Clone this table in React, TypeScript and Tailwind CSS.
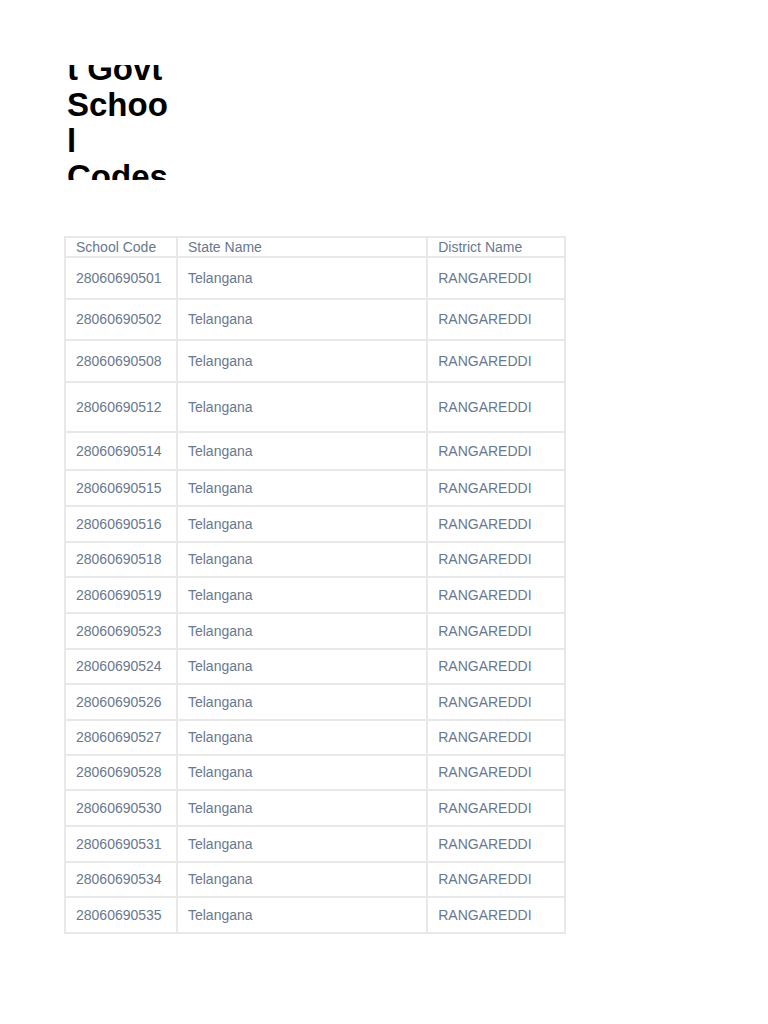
import React from 'react';

const rows = [
  { code: '28060690501', h: 'h-[42px]' },
  { code: '28060690502', h: 'h-[41px]' },
  { code: '28060690508', h: 'h-[42px]' },
  { code: '28060690512', h: 'h-[50px]' },
  { code: '28060690514', h: 'h-[38px]' },
  { code: '28060690515', h: 'h-[36px]' },
  { code: '28060690516', h: 'h-[36px]' },
  { code: '28060690518', h: 'h-[35px]' },
  { code: '28060690519', h: 'h-[36px]' },
  { code: '28060690523', h: 'h-[36px]' },
  { code: '28060690524', h: 'h-[35px]' },
  { code: '28060690526', h: 'h-[36px]' },
  { code: '28060690527', h: 'h-[35px]' },
  { code: '28060690528', h: 'h-[35px]' },
  { code: '28060690530', h: 'h-[36px]' },
  { code: '28060690531', h: 'h-[36px]' },
  { code: '28060690534', h: 'h-[35px]' },
  { code: '28060690535', h: 'h-[36px]' },
];

const cell = 'border-2 border-[#e8e8e8] px-[10px] text-left font-normal';

const App = () => {
  return (
    <div className="min-h-[1024px] bg-white font-['Liberation_Sans',Arial,sans-serif]">
      <div className="pt-[65px] pl-[67px]">
        {/* title is clipped by its narrow box, as in the page */}
        <div className="h-[115px] w-[120px] overflow-hidden">
          <h1 className="-mt-[50px] whitespace-nowrap text-[33px] font-bold leading-[36px] text-black">
            Distric
            <br />t Govt
            <br />
            Schoo
            <br />l
            <br />
            Codes
          </h1>
        </div>
      </div>

      <div className="pl-[64px] pt-[56px]">
        <table className="w-[502px] border-collapse text-[14px] text-[#68788f]">
          <thead>
            <tr className="h-[20px]">
              <th className={`${cell} w-[112px] leading-[16px]`}>School Code</th>
              <th className={`${cell} w-[252px] leading-[16px]`}>State Name</th>
              <th className={`${cell} w-[138px] leading-[16px]`}>District Name</th>
            </tr>
          </thead>
          <tbody>
            {rows.map((r) => (
              <tr key={r.code} className={r.h}>
                <td className={cell}>{r.code}</td>
                <td className={cell}>Telangana</td>
                <td className={cell}>RANGAREDDI</td>
              </tr>
            ))}
          </tbody>
        </table>
      </div>
    </div>
  );
};

export default App;
